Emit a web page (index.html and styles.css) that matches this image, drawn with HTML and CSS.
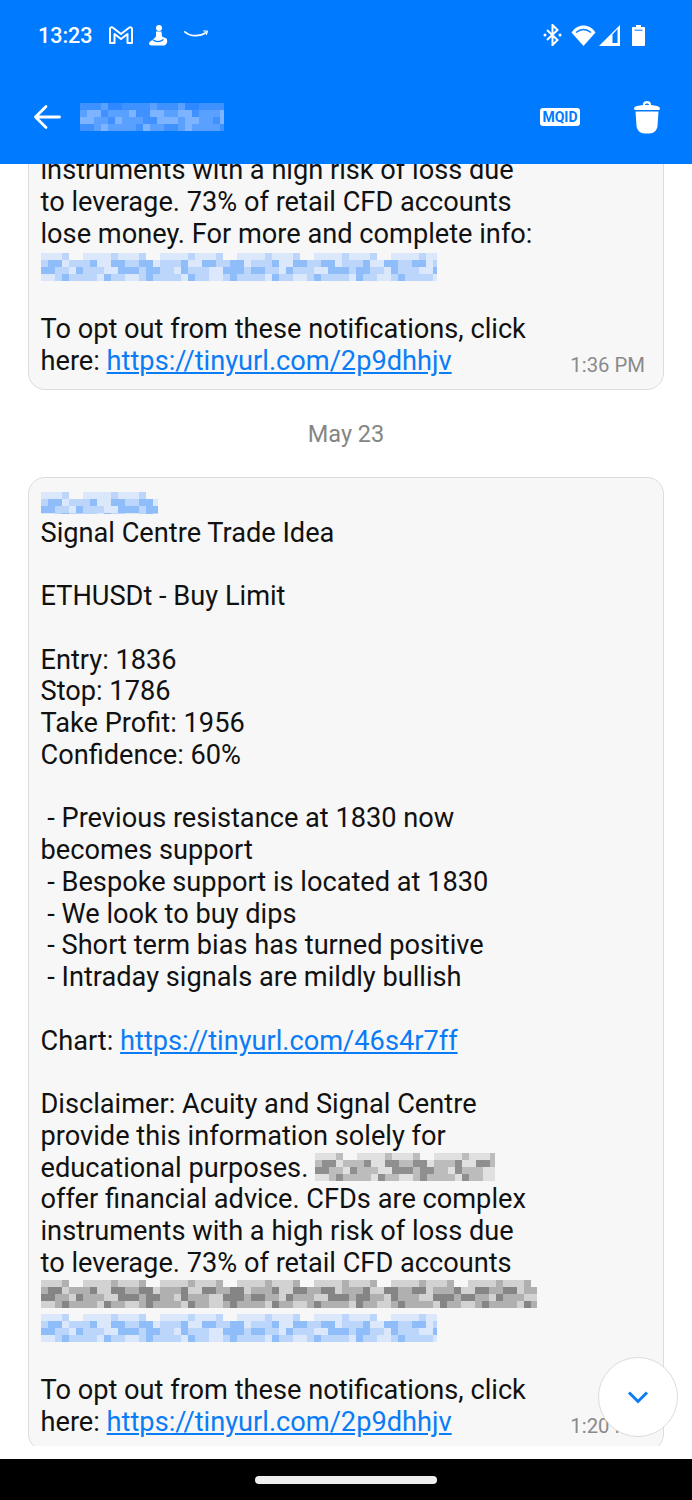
FILE: index.html
```html
<!DOCTYPE html>
<html lang="en">

<head>
  <meta charset="utf-8">
  <meta name="viewport" content="width=device-width, initial-scale=1">
  <title>Messages</title>
  <link rel="stylesheet" href="styles.css">
</head>

<body>
  <div class="phone">
    <!-- Status bar + toolbar -->
    <header class="header">
      <div class="status">
        <div class="status-left">
          <span class="clock">13:23</span>
          <svg class="ico-mail" viewBox="0 0 24 18" width="24" height="18"><path d="M1 17V3c0-1.600 1.800-2.300 3-1.300L12 8l8-6.300c1.200-1 3-.3 3 1.300v14h-4.500V8L12 13 5.500 8v9z" fill="none" stroke="#fff" stroke-width="2" stroke-linejoin="round"/></svg>
          <svg class="ico-fig" viewBox="0 0 19 21" width="19" height="21"><circle cx="10" cy="3" r="3" fill="#fff"/><path d="M7 6.500h5.500l.5 5 4.500 2c1.500 2.500.5 6-2 7H4c-2.500 0-4-.8-4-1.800 0-2 3-3.200 4-4.200l3-3z" fill="#fff"/><path d="M4 15c3 2 7 2 10.500-.5" fill="none" stroke="#007aff" stroke-width="1.300"/></svg>
          <svg class="ico-smile" viewBox="0 0 24 9" width="24" height="9"><path d="M.8 1.800c6 5 15 5 21 .8" fill="none" stroke="#fff" stroke-width="1.600" stroke-linecap="round"/><path d="M19.500 .9l4 .3-1.200 3.700" fill="none" stroke="#fff" stroke-width="1.200"/></svg>
        </div>
        <div class="status-right">
          <svg class="ico-bt" viewBox="0 0 19 22" width="19" height="22"><path d="M4 6l10.500 10-5 5V1l5 5L4 16" fill="none" stroke="#fff" stroke-width="2"/><circle cx="2" cy="11" r="1.500" fill="#fff"/><circle cx="17" cy="11" r="1.500" fill="#fff"/></svg>
          <svg class="ico-wifi" viewBox="0 0 25 21" width="25" height="21"><path d="M12.500 21L.5 7.500C3.500 3 8 .5 12.500.5s9 2.500 12 7z" fill="#fff"/><path d="M5 7.500C7.500 5.500 10 4.500 12.500 4.500s5 1 7.500 3" fill="none" stroke="#007aff" stroke-width="1.600"/></svg>
          <svg class="ico-sig" viewBox="0 0 21 21" width="21" height="21"><path d="M21 0v21H0z" fill="#fff"/><path d="M13.500 9.500V18H18.500V4z" fill="#007aff"/></svg>
          <svg class="ico-batt" viewBox="0 0 13 21" width="13" height="21"><path d="M4 0h5v2h3c.6 0 1 .4 1 1v17c0 .6-.4 1-1 1H1c-.6 0-1-.4-1-1V3c0-.6.4-1 1-1h3z" fill="#fff"/><path d="M2.500 5.200h8" stroke="#007aff" stroke-width="1"/></svg>
        </div>
      </div>
      <div class="toolbar">
        <svg class="back" viewBox="0 0 28 26" width="28" height="26"><path d="M26.500 13H2.500M13 2.500L2.500 13 13 23.500" fill="none" stroke="#fff" stroke-width="2.800" stroke-linecap="round" stroke-linejoin="round"/></svg>
        <div class="px px-title"></div>
        <span class="mqid">MQID</span>
        <svg class="trash" viewBox="0 0 26 34" width="26" height="34"><path d="M9 5V4c0-4 8-4 8 0v1c4 .4 9 1.200 9 3.500 0 1-1 1.500-2 1.500H2c-1 0-2-.5-2-1.500C0 6.200 5 5.400 9 5zm2 0h4c0-2-4-2-4 0z" fill="#fff" fill-rule="evenodd"/><path d="M1.500 11.500h23L23.500 26c-.4 4.500-4 7.500-8 7.500h-5c-4 0-7.600-3-8-7.500z" fill="#fff"/></svg>
      </div>
    </header>

    <!-- Conversation -->
    <main class="list">
      <div class="bubble bubble-first">
<div class="text">instruments with a high risk of loss due
to leverage. 73% of retail CFD accounts
lose money. For more and complete info:
<span class="px px-link"></span>

To opt out from these notifications, click</div>
        <div class="last">
          <span class="text">here: <a href="#">https://tinyurl.com/2p9dhhjv</a></span>
          <span class="time">1:36 PM</span>
        </div>
      </div>

      <div class="date">May 23</div>

      <div class="bubble">
        <div class="px px-sender"></div>
<div class="text">Signal Centre Trade Idea

ETHUSDt - Buy Limit

Entry: 1836
Stop: 1786
Take Profit: 1956
Confidence: 60%

 - Previous resistance at 1830 now
becomes support
 - Bespoke support is located at 1830
 - We look to buy dips
 - Short term bias has turned positive
 - Intraday signals are mildly bullish

Chart: <a href="#">https://tinyurl.com/46s4r7ff</a>

Disclaimer: Acuity and Signal Centre
provide this information solely for
educational purposes. <span class="px px-word"></span>
offer financial advice. CFDs are complex
instruments with a high risk of loss due
to leverage. 73% of retail CFD accounts
<span class="px px-line"></span>
<span class="px px-link"></span>

To opt out from these notifications, click</div>
        <div class="last">
          <span class="text">here: <a href="#">https://tinyurl.com/2p9dhhjv</a></span>
          <span class="time">1:20 PM</span>
        </div>
      </div>

      <button class="down" type="button" aria-label="Scroll down">
        <svg viewBox="0 0 22 14" width="22" height="14"><path d="M2 2.500l9 9 9-9" fill="none" stroke="#0a7cf5" stroke-width="3"/></svg>
      </button>
    </main>

    <div class="gap"></div>
    <nav class="navbar"><span class="pill"></span></nav>
  </div>
</body>

</html>
```

FILE: styles.css
```css
/* Styling for the page */
body {
  margin: 0;
  font-family: Roboto, "Noto Sans", sans-serif;
  background-color: white;
}

.phone {
  display: flex;
  flex-direction: column;
  width: 692px;
  height: 1500px;
  overflow: hidden;
}

/* Header */
.header {
  height: 164px;
  flex: none;
  background-color: #007aff;
  color: white;
}

.status {
  display: flex;
  justify-content: space-between;
  align-items: center;
  height: 70px;
  padding: 0 47px 0 38px;
}

.status-left,
.status-right {
  display: flex;
  align-items: center;
}

.clock {
  width: 54px;
  margin-right: 17px;
  font-size: 21.5px;
  font-weight: 500;
  white-space: nowrap;
}

.ico-mail {
  margin-right: 16px;
}

.ico-fig {
  margin-right: 16px;
}

.ico-smile {
  margin-bottom: 1px;
}

.ico-bt {
  margin-right: 9px;
}

.ico-wifi {
  margin-right: 3px;
}

.ico-sig {
  margin-right: 12px;
}

.toolbar {
  display: flex;
  align-items: center;
  height: 94px;
  padding: 0 32px 0 33px;
}

.back {
  margin-right: 19px;
}

.mqid {
  width: 40px;
  margin-right: 54px;
  margin-left: auto;
  font-size: 14px;
  line-height: 18px;
  font-weight: 700;
  text-align: center;
  color: #007aff;
  background-color: white;
  border-radius: 3px;
}

/* Conversation */
.list {
  position: relative;
  flex: 1;
  overflow: hidden;
}

.bubble {
  margin: 0 28px;
  padding: 12px 18px 12px 11.500px;
  background-color: #f7f7f7;
  border: 1.5px solid #dcdcdc;
  border-radius: 17px;
}

.bubble-first {
  margin-top: -22px;
}

.text {
  font-size: 27.200px;
  line-height: 31.75px;
  color: #111;
  white-space: pre-wrap;
}

.text a {
  color: #0a7cf5;
}

.last {
  display: flex;
  justify-content: space-between;
  align-items: flex-end;
}

.time {
  font-size: 20.300px;
  line-height: 24px;
  color: #8a8a8a;
}

.date {
  padding: 30px 0 29px;
  text-align: center;
  font-size: 23.500px;
  line-height: 28px;
  color: #858585;
}

/* Pixelated (censored) text: four rows of 7px cells, each row its own pattern */
.px {
  --l: #dbe8fc;
  --m: #bcd6fb;
  --d: #8fbdfa;
  --g: #f7f7f7;
  display: inline-block;
  vertical-align: top;
  height: 28px;
  background-color: var(--m);
  background-image:
    repeating-linear-gradient(90deg, var(--l) 0 21px, var(--m) 21px 28px, var(--g) 28px 42px, var(--l) 42px 70px, var(--m) 70px 77px),
    repeating-linear-gradient(90deg, var(--m) 0 7px, var(--d) 7px 21px, var(--l) 21px 28px, var(--m) 28px 49px, var(--d) 49px 56px, var(--l) 56px 70px, var(--d) 70px 84px, var(--m) 84px 91px),
    repeating-linear-gradient(90deg, var(--d) 0 14px, var(--m) 14px 28px, var(--l) 28px 35px, var(--d) 35px 42px, var(--m) 42px 63px, var(--l) 63px 77px, var(--d) 77px 98px, var(--m) 98px 105px),
    repeating-linear-gradient(90deg, var(--l) 0 14px, var(--m) 14px 21px, var(--d) 21px 28px, var(--m) 28px 56px, var(--l) 56px 63px, var(--d) 63px 70px, var(--m) 70px 84px);
  background-size: 100% 7px;
  background-repeat: no-repeat;
  background-position: 0 0, 0 7px, 0 14px, 0 21px;
}

.px-title {
  --l: #3f91ff;
  --m: #5aa0ff;
  --d: #7db3ff;
  --g: #2f88ff;
  width: 144px;
  height: 28px;
}

.px-link {
  width: 396px;
  margin-top: 3px;
}

.px-sender {
  display: block;
  width: 117px;
  height: 21px;
  margin-top: 2px;
  margin-bottom: 4.400px;
}

.px-word {
  --l: #e0e0e0;
  --m: #bcbcbc;
  --d: #8f8f8f;
  width: 180px;
}

.px-line {
  --l: #d2d2d2;
  --m: #b0b0b0;
  --d: #858585;
  width: 496px;
}

/* Round button over the list */
.down {
  position: absolute;
  left: 598px;
  top: 1193px;
  display: flex;
  justify-content: center;
  align-items: center;
  width: 80px;
  height: 80px;
  padding: 0;
  background-color: white;
  border: 1.5px solid #dcdcdc;
  border-radius: 50%;
}

/* Bottom */
.gap {
  height: 13px;
  flex: none;
}

.navbar {
  display: flex;
  justify-content: center;
  align-items: center;
  height: 41px;
  flex: none;
  background-color: black;
}

.pill {
  width: 182px;
  height: 8px;
  border-radius: 4px;
  background-color: #efefef;
}
```
